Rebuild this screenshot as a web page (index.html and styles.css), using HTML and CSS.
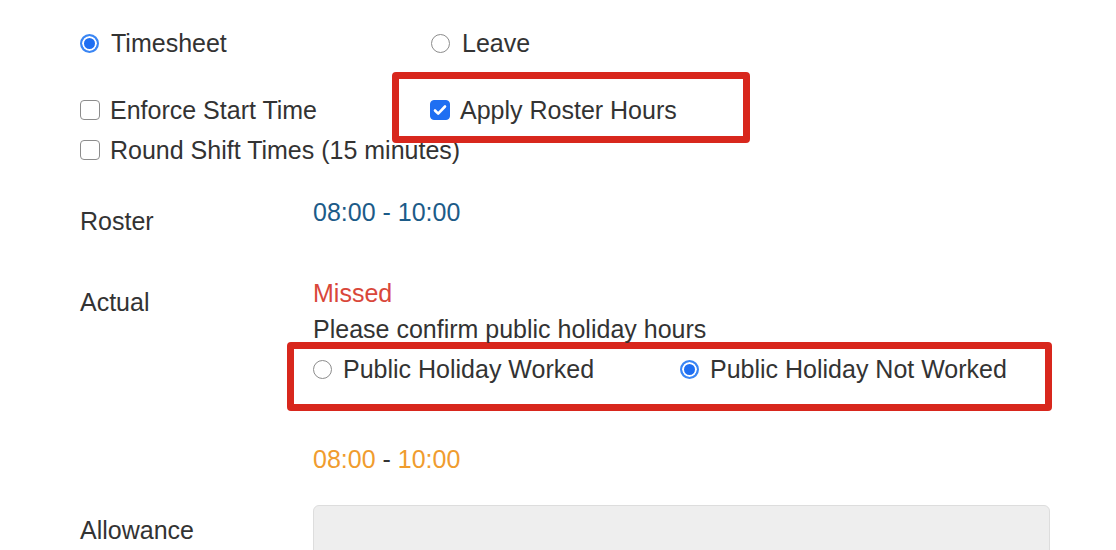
FILE: index.html
```html
<!DOCTYPE html>
<html lang="en">
<head>
    <meta charset="UTF-8">
    <meta name="viewport" content="width=device-width, initial-scale=1.0">
    <title>Timesheet Entry</title>
    <link rel="stylesheet" href="styles.css">
</head>
<body>
    <form class="timesheet-form">
        <div class="type-row">
            <label class="choice"><input type="radio" name="entry-type" checked> Timesheet</label>
            <label class="choice"><input type="radio" name="entry-type"> Leave</label>
        </div>

        <div class="options-row">
            <div class="options-left">
                <label class="choice check"><input type="checkbox"> Enforce Start Time</label>
                <label class="choice check"><input type="checkbox"> Round Shift Times (15 minutes)</label>
            </div>
            <div class="highlight highlight-roster">
                <label class="choice check"><input type="checkbox" checked> Apply Roster Hours</label>
            </div>
        </div>

        <div class="field field-roster">
            <span class="field-label">Roster</span>
            <div class="field-value">
                <span class="time-roster">08:00 - 10:00</span>
            </div>
        </div>

        <div class="field field-actual">
            <span class="field-label">Actual</span>
            <div class="field-value">
                <div class="missed">Missed</div>
                <div>Please confirm public holiday hours</div>
                <div class="highlight highlight-holiday">
                    <label class="choice"><input type="radio" name="holiday"> Public Holiday Worked</label>
                    <label class="choice"><input type="radio" name="holiday" checked> Public Holiday Not Worked</label>
                </div>
                <div class="time-actual"><span class="time-part">08:00</span> - <span class="time-part">10:00</span></div>
            </div>
        </div>

        <div class="field field-allowance">
            <span class="field-label">Allowance</span>
            <div class="field-value">
                <div class="allowance-input"></div>
            </div>
        </div>
    </form>
</body>
</html>
```

FILE: styles.css
```css
body {
    font-family: "Liberation Sans", Arial, sans-serif;
    font-size: 25px;
    color: #333;
    margin: 0;
    padding: 23px 0 0 80px;
    background: #fff;
}

.timesheet-form {
    width: 970px;
}

.choice {
    display: flex;
    align-items: center;
    gap: 12px;
    line-height: 40px;
    white-space: nowrap;
}

.choice.check {
    gap: 10px;
}

input[type="radio"] {
    appearance: none;
    -webkit-appearance: none;
    width: 19px;
    height: 19px;
    margin: 0;
    border: 1px solid #8c8c8c;
    border-radius: 50%;
    background: #fff;
    flex-shrink: 0;
}

input[type="radio"]:checked {
    border: 2px solid #3a86f4;
    background: #1f6ff2;
    box-shadow: inset 0 0 0 2px #fff;
}

input[type="checkbox"] {
    appearance: none;
    -webkit-appearance: none;
    width: 20px;
    height: 20px;
    margin: 0;
    border: 1px solid #8c8c8c;
    border-radius: 4px;
    background: #fff;
    flex-shrink: 0;
}

input[type="checkbox"]:checked {
    border-color: #1f6ff2;
    background: #1f6ff2 url("data:image/svg+xml,%3Csvg xmlns='http://www.w3.org/2000/svg' viewBox='0 0 20 20'%3E%3Cpath d='M5 10.5l3.2 3.2L15 6.5' fill='none' stroke='%23fff' stroke-width='2.6' stroke-linecap='round' stroke-linejoin='round'/%3E%3C/svg%3E") center / 20px 20px no-repeat;
}

.type-row {
    display: grid;
    grid-template-columns: 351px 1fr;
}

.options-row {
    display: grid;
    grid-template-columns: 351px 1fr;
    margin-top: 27px;
}

.highlight {
    border: 7px solid #d8271d;
    border-radius: 4px;
    box-sizing: border-box;
}

.highlight-roster {
    width: 358px;
    height: 71px;
    margin: -18px 0 0 -39px;
    padding: 11px 0 0 31px;
}

.field {
    display: grid;
    grid-template-columns: 233px 1fr;
    line-height: 36px;
}

.field-label {
    padding-top: 9px;
}

.field-roster {
    margin-top: 24px;
}

.field-actual {
    margin-top: 36px;
}

.time-roster {
    color: #1c5b88;
}

.missed {
    color: #d9473a;
}

.highlight-holiday {
    display: grid;
    grid-template-columns: 367px 1fr;
    width: 765px;
    margin: -5px 0 0 -26px;
    padding: 0 0 17px 19px;
}

.highlight-holiday .choice {
    line-height: 36px;
    padding-top: 2px;
    gap: 11px;
}

.time-actual {
    margin-top: 30px;
}

.time-part {
    color: #f09c2e;
}

.field-allowance {
    margin-top: 28px;
}

.field-allowance .field-label {
    padding-top: 7px;
}

.allowance-input {
    height: 68px;
    background: #eee;
    border: 1px solid #ddd;
    border-radius: 6px;
}
```
